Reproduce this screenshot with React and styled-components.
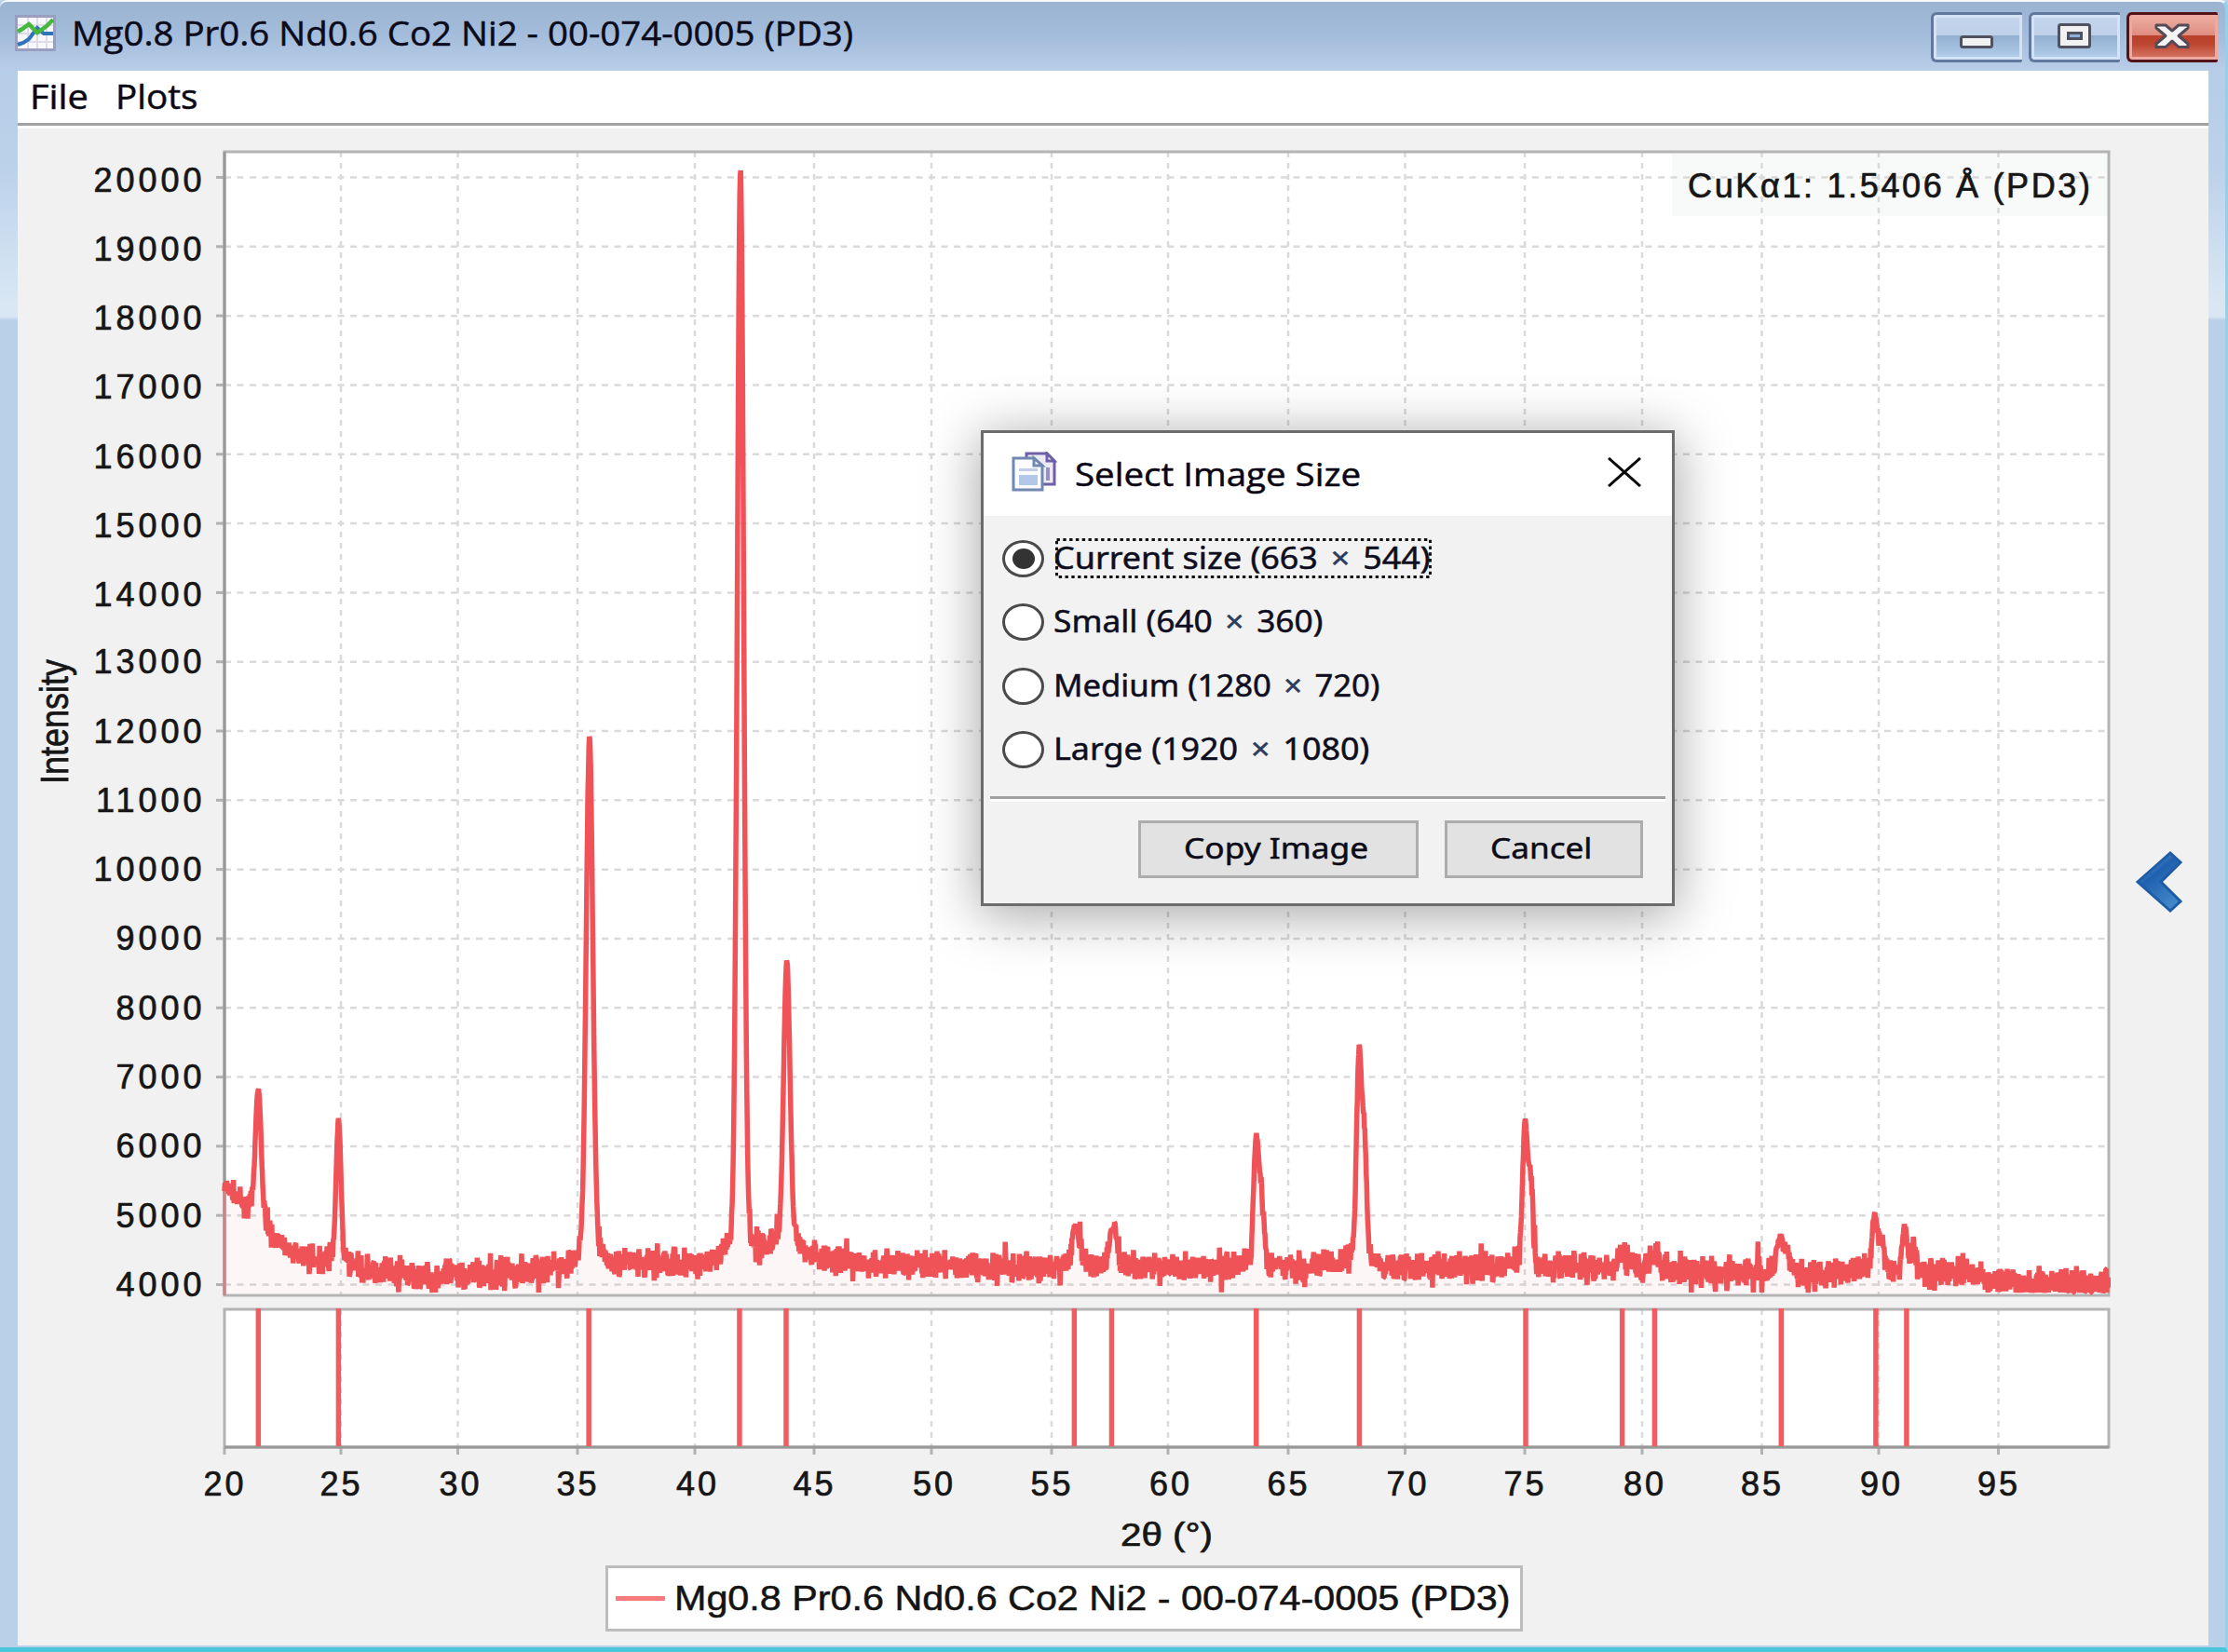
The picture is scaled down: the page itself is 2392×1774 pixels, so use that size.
import React, { useLayoutEffect, useRef, useState } from 'react'
import styled, { createGlobalStyle } from 'styled-components';

const GlobalStyle = createGlobalStyle`
    body {
        margin: 0;
        background: #bad1e9;
        overflow: hidden;
    }
    * {
        box-sizing: border-box;
    }
`;

const Window = styled.div`
    position: relative;
    display: flex;
    flex-direction: column;
    width: 2392px;
    height: 1774px;
    border-top: 2px solid #f4f8fa;
    border-right: 3px solid #8ed3ea;
    border-bottom: 5px solid #49c5dc;
    border-radius: 8px 8px 0 0;
    background: linear-gradient(#b6cde8 74px, #bcd2ea 180px, #d9e7f4 325px, #d9e7f4 338px, #b9d0e9 342px);
    -webkit-text-stroke: 0.5px currentColor;
`;

const TitleBar = styled.div`
    display: flex;
    height: 74px;
    padding-left: 16px;
    padding-right: 8px;
    border-radius: 8px 8px 0 0;
    background: linear-gradient(#9ab3d0, #a3bcdb 45%, #b8cde8);
`;

const AppIcon = styled.svg`
    width: 44px;
    height: 39px;
    margin-top: 14px;
`;

const Title = styled.h1`
    flex: 1;
    margin: 0;
    padding-left: 17px;
    color: #0b0b1c;
    font: 400 36px/68px "Open Sans", sans-serif;
`;

const WindowButtons = styled.div`
    display: flex;
    gap: 7px;
    padding-top: 11px;
`;

const WindowButton = styled.button`
    display: flex;
    align-items: center;
    justify-content: center;
    width: 98px;
    height: 54px;
    padding: 0 4px 0 0;
    border: 3px solid ${props => props.$close ? '#541219' : '#60789b'};
    border-right: 0;
    border-radius: 6px 2px 2px 6px;
    box-shadow: inset 0 0 0 3px ${props => props.$close ? '#eeaaa0' : '#d3e2f4'};
    background: ${props => props.$close
        ? 'linear-gradient(#eeb0a5, #df8d80 45%, #b9402a 46%, #bd4630 65%, #d97a6a)'
        : 'linear-gradient(#c4d5ec, #bfd1e9 45%, #92afd0 46%, #a0bddd 70%, #b8d0ec)'};
`;

const MenuBar = styled.div`
    display: flex;
    gap: 29px;
    height: 62px;
    margin: 0 18px 0 19px;
    padding-left: 13px;
    border-bottom: 3px solid #fdfdfd;
    box-shadow: inset 0 -3px 0 #a0a0a0;
    background: #fff;
`;

const MenuItem = styled.div`
    height: 56px;
    color: #0c0814;
    font: 400 36px/56px "Open Sans", sans-serif;
`;

const Client = styled.div`
    display: flex;
    height: 1629px;
    margin: 0 18px 0 19px;
    background: #f1f1f1;
`;

const ChartColumn = styled.div`
    display: flex;
    flex-direction: column;
    align-items: center;
    width: 2247px;
`;

const ChartSvg = styled.svg`
    display: block;
    width: 2247px;
    height: 1543px;
    font-family: "Liberation Sans", Arial, sans-serif;
`;

const Legend = styled.div`
    display: flex;
    align-items: center;
    gap: 10px;
    width: 985px;
    height: 71px;
    padding-left: 8px;
    border: 3px solid #bcbcbc;
    background: #fff;
    color: #141414;
    font: 400 36px/40px "Liberation Sans", Arial, sans-serif;
`;

const LegendLine = styled.div`
    width: 53px;
    height: 5px;
    background: #f77b7b;
`;

const SidePanel = styled.div`
    display: flex;
    align-items: center;
    justify-content: center;
    flex: 1;
    padding: 0 1px 12px 0;
`;

const Dialog = styled.div`
    position: absolute;
    left: 1053px;
    top: 460px;
    width: 745px;
    height: 511px;
    border: 3px solid #6c6c6c;
    background: #f2f2f2;
    box-shadow: 0 8px 54px 2px rgba(0, 0, 0, 0.35);
`;

const DialogHeader = styled.div`
    display: flex;
    justify-content: space-between;
    height: 89px;
    padding: 20px 33px 0 30px;
    background: #fff;
`;

const DialogTitle = styled.h2`
    flex: 1;
    margin: 0;
    padding-left: 19px;
    color: #0a0614;
    font: 400 35px/48px "Open Sans", sans-serif;
`;

const CloseIcon = styled.svg`
    width: 36px;
    height: 32px;
    margin-top: 6px;
`;

const Options = styled.div`
    height: 304px;
    margin: 0 7px;
    padding: 12px 0 0 13px;
    border-bottom: 3px solid #a0a0a0;
    box-shadow: 0 3px 0 #fdfdfd;
`;

const Option = styled.label`
    display: flex;
    align-items: center;
    gap: 10px;
    height: 68.3px;
`;

const Radio = styled.span`
    display: flex;
    align-items: center;
    justify-content: center;
    width: 45px;
    height: 40px;
    border: 3px solid #4a4a4a;
    border-radius: 50%;
    background: #fff;

    &::after {
        content: '';
        width: 24px;
        height: 22px;
        border-radius: 50%;
        background: ${props => props.$checked ? '#333' : 'transparent'};
    }
`;

const OptionText = styled.span`
    position: relative;
    padding-bottom: 2px;
    color: #0e0e20;
    font: 400 32px/42px "Noto Sans", sans-serif;
`;

const Times = styled.span`
    padding: 0 4px;
    color: #2c3c5c;
`;

const FocusRing = styled.svg`
    position: absolute;
    left: 2px;
    top: 0;
    width: 405px;
    height: 43px;
`;

const Actions = styled.div`
    display: flex;
    justify-content: flex-end;
    gap: 28px;
    padding: 23px 31px 0 0;
`;

const ActionButton = styled.button`
    width: ${props => props.$width}px;
    height: 62px;
    padding: 0 5px 4px 0;
    border: 3px solid #adadad;
    background: #e2e2e2;
    color: #0c0c18;
    font: 400 31px/40px "Noto Sans", sans-serif;
    -webkit-text-stroke: 0.5px currentColor;
`;

const FitBox = styled.span`
    display: inline-block;
    text-align: left;
    white-space: nowrap;
`;

const FitInner = styled.span`
    display: inline-block;
    transform-origin: 0 50%;
`;

// Stretches a run of text horizontally so that it fills a given width.
function FitText({ width, children }) {
    const ref = useRef(null);
    const [scale, setScale] = useState(1);
    useLayoutEffect(() => {
        setScale(width / ref.current.offsetWidth);
    }, [width]);
    return (
        <FitBox style={{ width }}>
            <FitInner ref={ref} style={{ transform: `scaleX(${scale})` }}>{children}</FitInner>
        </FitBox>
    )
}

const NAME = 'Mg0.8 Pr0.6 Nd0.6 Co2 Ni2 - 00-074-0005 (PD3)';

const LEFT = 241;
const RIGHT = 2264;
const TOP = 163;
const BOTTOM = 1391;
const STICK_TOP = 1406;
const STICK_BOTTOM = 1554;

const toX = angle => LEFT + (angle - 20) * 25.4;
const toY = counts => 1379 - (counts - 4000) * 0.0743125;

// tick value and its snapped x position
const xTicks = [
    [20, 241], [25, 366], [30, 491.5], [35, 620], [40, 746], [45, 874], [50, 1000], [55, 1129],
    [60, 1254], [65, 1383], [70, 1508.5], [75, 1637], [80, 1763], [85, 1891.5], [90, 2017], [95, 2145.5],
];
const yTicks = Array.from({ length: 17 }, (_, i) => 4000 + i * 1000);
const sticks = [21.43, 24.82, 35.4, 41.77, 43.74, 55.92, 57.5, 63.61, 67.97, 75, 79.08, 80.45, 85.8, 89.8, 91.1];

const background = [
    [20, 5400], [20.6, 5200], [21.2, 4960], [22, 4640], [23, 4420], [24, 4290], [25.5, 4190], [27, 4120], [29, 4115],
    [31, 4140], [33, 4175], [35, 4210], [37, 4270], [40, 4270], [42, 4330], [43.3, 4420], [45, 4360], [47, 4300],
    [50, 4270], [55, 4240], [60, 4240], [66, 4250], [72, 4230], [78, 4230], [80, 4230], [82, 4165], [88, 4155],
    [93, 4160], [95, 4060], [99.7, 3985],
];

// [angle, height above the background, width, alpha-2 offset]
const peaks = [
    [21.43, 1770, 0.12, 0], [24.82, 1930, 0.1, 0], [35.43, 7180, 0.14, 0], [41.81, 15280, 0.135, 0],
    [43.77, 3870, 0.13, 0], [55.93, 530, 0.1, 0.22], [57.5, 450, 0.12, 0.22], [63.6, 1640, 0.1, 0.22],
    [67.95, 2740, 0.1, 0.22], [74.97, 1890, 0.1, 0.24], [79.06, 140, 0.15, 0.25], [80.43, 140, 0.15, 0.25],
    [85.75, 450, 0.13, 0.3], [89.75, 760, 0.11, 0.3], [91.02, 600, 0.11, 0.38],
];

function backgroundAt(angle) {
    let i = 1;
    while (i < background.length - 1 && background[i][0] < angle) i++;
    const [x0, y0] = background[i - 1];
    const [x1, y1] = background[i];
    return y0 + (y1 - y0) * (angle - x0) / (x1 - x0);
}

function buildTrace() {
    let seed = 7;
    const random = () => {
        seed = (seed * 16807) % 2147483647;
        return seed / 2147483647;
    };
    const points = [];
    for (let i = 0; i <= 3982; i++) {
        const angle = 20 + i * 0.02;
        let value = backgroundAt(angle);
        let main = 0;
        peaks.forEach(([center, height, width, offset]) => {
            const d = angle - center;
            main += height * Math.exp(-d * d / (2 * width * width));
            if (offset) value += height * 0.6 * Math.exp(-((d - offset) ** 2) / (2 * width * width));
            value += Math.min(height * 0.1, 480) / (1 + (d / 0.45) ** 2);
        });
        value += main;
        // the noise is hidden by the steep flanks of the tall peaks
        const noise = main > 300 ? 50 : angle < 24 ? 130 : 170;
        value += (random() + random() + random() + random() - 2) * noise;
        if (main < 100 && random() < 0.07) {
            value += (random() - 0.5) * 460;
        }
        points.push(`${toX(angle).toFixed(1)},${Math.min(toY(value), BOTTOM - 3).toFixed(1)}`);
    }
    return points.join(' ');
}

const trace = buildTrace();

function Chart() {
    return (
        <ChartSvg viewBox="19 138 2247 1543">
            <rect x={LEFT} y={TOP} width={RIGHT - LEFT} height={BOTTOM - TOP} fill="#fff" />
            <rect x={LEFT} y={STICK_TOP} width={RIGHT - LEFT} height={STICK_BOTTOM - STICK_TOP} fill="#fff" />
            <rect x="1795" y="165" width="469" height="67" fill="#f8f9f9" />
            <g stroke="#dadada" strokeWidth="2.5">
                {yTicks.map(v => (
                    <line key={v} x1={LEFT} x2={RIGHT} y1={toY(v) + 0.5} y2={toY(v) + 0.5} strokeDasharray="7 6.5" />
                ))}
                {xTicks.slice(1).map(([v, x]) => (
                    <g key={v} strokeDasharray="6 6">
                        <line x1={x} x2={x} y1={TOP} y2={BOTTOM} />
                        <line x1={x} x2={x} y1={STICK_TOP} y2={STICK_BOTTOM} />
                    </g>
                ))}
            </g>
            <g stroke="#b2b2b2" strokeWidth="3">
                {yTicks.map(v => <line key={v} x1={LEFT - 9} x2={LEFT} y1={toY(v) + 0.5} y2={toY(v) + 0.5} />)}
                {xTicks.map(([v, x]) => <line key={v} x1={x} x2={x} y1={STICK_BOTTOM} y2={STICK_BOTTOM + 8} />)}
            </g>
            <g fill="none" stroke="#b4b4b4" strokeWidth="3">
                <rect x={LEFT} y={TOP} width={RIGHT - LEFT} height={BOTTOM - TOP} />
                <rect x={LEFT} y={STICK_TOP} width={RIGHT - LEFT} height={STICK_BOTTOM - STICK_TOP} />
                <path d={`M${LEFT} ${TOP}V${BOTTOM}M${LEFT} ${STICK_BOTTOM}H${RIGHT}`} stroke="#989898" />
            </g>
            <polygon points={`${LEFT},${BOTTOM - 2} ${trace} ${RIGHT},${BOTTOM - 2}`} fill="rgba(214, 84, 70, 0.05)" />
            <line x1={LEFT} x2={LEFT} y1="1275" y2={BOTTOM} stroke="#cf8383" strokeWidth="3" />
            <polyline points={trace} fill="none" stroke="#f05357" strokeWidth="5.5" strokeLinejoin="bevel" />
            {sticks.map(v => (
                <line key={v} x1={toX(v)} x2={toX(v)} y1={STICK_TOP - 1} y2={STICK_BOTTOM - 1} stroke="#f05c60" strokeWidth="5.5" />
            ))}
            <g fill="#161616" stroke="#161616" strokeWidth="0.7" fontSize="36">
                {yTicks.map(v => (
                    <text key={v} x="220.500" y={toY(v) + (v >= 14000 ? 15.5 : 13)} textAnchor="end" letterSpacing="4">{v}</text>
                ))}
                {xTicks.map(([v, x]) => (
                    <text key={v} x={x + (v % 10 || v === 20 ? 0.5 : 3)} y="1606" textAnchor="middle" letterSpacing="3">{v}</text>
                ))}
                <text x="1203" y="1660" textLength="99" lengthAdjust="spacingAndGlyphs" fontSize="35">2θ (°)</text>
                <text x="1812" y="212" textLength="434" letterSpacing="2">CuKα1: 1.5406 Å (PD3)</text>
                <text transform="translate(73 842) rotate(-90)" textLength="134" lengthAdjust="spacingAndGlyphs" fontSize="42">Intensity</text>
            </g>
        </ChartSvg>
    )
}

function ArrowIcon() {
    return (
        <svg width="52" height="68" viewBox="0 0 52 68">
            <defs>
                <linearGradient id="arrow" x1="0" y1="0" x2="0.6" y2="1">
                    <stop offset="0" stopColor="#2463b0" />
                    <stop offset="0.2" stopColor="#4a8ed0" />
                    <stop offset="0.45" stopColor="#2061ae" />
                    <stop offset="1" stopColor="#4086c8" />
                </linearGradient>
            </defs>
            <path d="M3 34 38 3 49 13 28 34 49 55 38 65Z" fill="url(#arrow)" stroke="#1f5ca8" strokeWidth="3" />
        </svg>
    )
}

function DocumentsIcon() {
    return (
        <svg width="49" height="43" viewBox="0 0 49 43">
            <path d="M16 2H38L46 10V35H16Z" fill="#eeeaf4" stroke="#6f5fa8" strokeWidth="3" />
            <path d="M38 2V10H46Z" fill="#fff" stroke="#6f5fa8" strokeWidth="3" />
            <path d="M39 17V31" stroke="#9a90bf" strokeWidth="4" />
            <path d="M2 7H24L33 15V41H2Z" fill="#fafcff" stroke="#7189b2" strokeWidth="3" />
            <path d="M24 7V15H33Z" fill="#fff" stroke="#7189b2" strokeWidth="3" />
            <path d="M8 19.500H28" stroke="#c2cdec" strokeWidth="3" />
            <rect x="8" y="25" width="20" height="11" fill="#b3c7e8" />
        </svg>
    )
}

const options = [
    { label: 'Current size (663', height: '544)', width: 404, checked: true },
    { label: 'Small (640', height: '360)', width: 289 },
    { label: 'Medium (1280', height: '720)', width: 350 },
    { label: 'Large (1920', height: '1080)', width: 339 },
];

export default function App() {
    return (
        <>
            <GlobalStyle />
            <Window>
                <TitleBar>
                    <AppIcon viewBox="0 0 44 39">
                        <rect x="1.500" y="1.500" width="41" height="36" fill="#f8f8fc" stroke="#9a9fc2" strokeWidth="3" />
                        <path d="M14 3V36M24 3V36M34 3V36M3 11H41M3 20H41M3 29H41" stroke="#dcdcea" strokeWidth="2" />
                        <path d="M3 32 9 30 15 26 24 14 31 20H41" fill="none" stroke="#2f74b8" strokeWidth="4" />
                        <path d="M3 18 8 15 15 10 24 19 34 12 41 5" fill="none" stroke="#46b83c" strokeWidth="4.500" />
                    </AppIcon>
                    <Title><FitText width={839}>{NAME}</FitText></Title>
                    <WindowButtons>
                        <WindowButton>
                            <svg width="36" height="30" viewBox="0 0 36 30">
                                <rect x="1.500" y="14.500" width="33" height="11" rx="2" fill="#f2f2f2" stroke="#50525f" strokeWidth="3" />
                            </svg>
                        </WindowButton>
                        <WindowButton>
                            <svg width="36" height="30" viewBox="0 0 36 30">
                                <rect x="1.500" y="1.500" width="33" height="24" rx="2" fill="#f2f2f2" stroke="#50525f" strokeWidth="3" />
                                <rect x="11.500" y="10.500" width="14" height="6" fill="#8fb0d8" stroke="#50525f" strokeWidth="3" />
                            </svg>
                        </WindowButton>
                        <WindowButton $close>
                            <svg width="38" height="30" viewBox="0 0 38 30">
                                <path d="M2 2H12L19 8 26 2H36V5L26 13.500 36 22V25.500H26L19 19 12 25.500H2V22L12 13.500 2 5Z" fill="#f4f4f4" stroke="#554a56" strokeWidth="3" strokeLinejoin="round" />
                            </svg>
                        </WindowButton>
                    </WindowButtons>
                </TitleBar>
                <MenuBar>
                    <MenuItem><FitText width={63}>File</FitText></MenuItem>
                    <MenuItem><FitText width={88}>Plots</FitText></MenuItem>
                </MenuBar>
                <Client>
                    <ChartColumn>
                        <Chart />
                        <Legend>
                            <LegendLine />
                            <FitText width={897}>{NAME}</FitText>
                        </Legend>
                    </ChartColumn>
                    <SidePanel>
                        <ArrowIcon />
                    </SidePanel>
                </Client>
                <Dialog>
                    <DialogHeader>
                        <DocumentsIcon />
                        <DialogTitle><FitText width={307}>Select Image Size</FitText></DialogTitle>
                        <CloseIcon viewBox="0 0 36 32">
                            <path d="M1 1 35 31M35 1 1 31" stroke="#0a0a0a" strokeWidth="3" />
                        </CloseIcon>
                    </DialogHeader>
                    <Options>
                        {options.map(option => (
                            <Option key={option.label}>
                                <Radio $checked={option.checked} />
                                <OptionText>
                                    <FitText width={option.width}>
                                        {option.label} <Times>×</Times> {option.height}
                                    </FitText>
                                    {option.checked && (
                                        <FocusRing>
                                            <rect x="1.500" y="1.500" width="401" height="40" fill="none" stroke="#111" strokeWidth="3" strokeDasharray="3.400 3.400" />
                                        </FocusRing>
                                    )}
                                </OptionText>
                            </Option>
                        ))}
                    </Options>
                    <Actions>
                        <ActionButton $width={301}><FitText width={198}>Copy Image</FitText></ActionButton>
                        <ActionButton $width={213}><FitText width={110}>Cancel</FitText></ActionButton>
                    </Actions>
                </Dialog>
            </Window>
        </>
    )
}
